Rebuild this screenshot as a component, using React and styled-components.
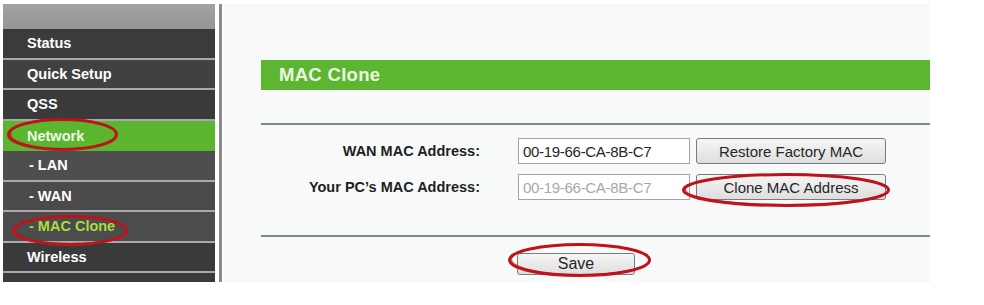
import React from 'react'
import styled, { createGlobalStyle } from 'styled-components'

const GlobalStyle = createGlobalStyle`
  body {
    margin: 0;
    background: #ffffff;
    font-family: "Liberation Sans", Arial, sans-serif;
  }
`

const menu = [
  { label: 'Status', bg: '#3b3b3b' },
  { label: 'Quick Setup', bg: '#414141' },
  { label: 'QSS', bg: '#3a3a3a' },
  { label: 'Network', bg: '#5cb52f', active: true },
  { label: '- LAN', bg: '#4e4e4e' },
  { label: '- WAN', bg: '#4a4a4a' },
  { label: '- MAC Clone', bg: '#4c4c4c', current: true },
  { label: 'Wireless', bg: '#3a3a3a' }
]

const marks = [
  { x: 7, y: 118, w: 111, h: 33 },
  { x: 12, y: 215, w: 116, h: 31 },
  { x: 682, y: 173, w: 208, h: 34 },
  { x: 508, y: 243, w: 143, h: 34 }
]

const Page = styled.div`
  position: relative;
  display: flex;
  align-items: flex-start;
  padding: 4px 0 0 3px;
  width: 930px;
`

const Sidebar = styled.nav`
  width: 212px;
  height: 278px;
  display: flex;
  flex-direction: column;
  background: #3a3a3a;
`

const SideTop = styled.div`
  height: 25px;
  background: linear-gradient(#a3a3a3, #959595);
`

const MenuItem = styled.div`
  height: 30.5px;
  box-sizing: border-box;
  display: flex;
  align-items: center;
  padding-left: ${p => (p.$sub ? 26 : 24)}px;
  background: ${p => p.$bg};
  border-bottom: ${p => (p.$active ? '0' : '2px solid #a9a9a9')};
  color: ${p => (p.$current ? '#a9dc3c' : p.$active ? '#eef8e4' : '#ffffff')};
  font-size: 14.5px;
  font-weight: bold;
`

const Divider = styled.div`
  width: 3px;
  height: 278px;
  margin-left: 4px;
  background: #8c8c8c;
`

const Content = styled.main`
  margin-left: 2px;
  width: 706px;
  height: 279px;
  box-sizing: border-box;
  padding: 56px 0 0 37px;
  background: #f8f9f9;
`

const TitleBar = styled.div`
  height: 30px;
  display: flex;
  align-items: center;
  padding-left: 18px;
  background: #5db632;
  color: #eef6e2;
  font-size: 18.5px;
  font-weight: bold;
  letter-spacing: 0.3px;
`

const Rule = styled.div`
  height: 2px;
  margin-top: ${p => p.$top}px;
  background: #7c8b89;
`

const Form = styled.div`
  display: grid;
  grid-template-columns: 219px 172px 190px;
  column-gap: 38px;
  row-gap: 10px;
  padding-top: 13px;
  & > *:nth-child(3n) {
    margin-left: -32px;
  }
`

const Label = styled.div`
  height: 26px;
  display: flex;
  align-items: center;
  justify-content: flex-end;
  color: #1f1f1f;
  font-size: 14.5px;
  font-weight: bold;
`

const Field = styled.div`
  height: 26px;
  box-sizing: border-box;
  display: flex;
  align-items: center;
  padding-left: 4px;
  background: #ffffff;
  border: 1px solid #a4a4a4;
  color: ${p => (p.$muted ? '#a8a8a8' : '#262626')};
  font-size: 15px;
  letter-spacing: -0.3px;
`

const Button = styled.div`
  height: ${p => p.$h || 26}px;
  width: ${p => p.$w || 190}px;
  box-sizing: border-box;
  display: flex;
  align-items: center;
  justify-content: center;
  background: linear-gradient(#f6f6f6, #dedede);
  border: 1px solid #7b7b7b;
  border-radius: 3px;
  color: #262626;
  font-size: ${p => p.$fs || 15}px;
`

const SaveRow = styled.div`
  padding: 16px 0 0 256px;
`

const Mark = styled.svg`
  position: absolute;
  overflow: visible;
  pointer-events: none;
`

function Oval ({ x, y, w, h }) {
  return (
    <Mark style={{ left: x, top: y, width: w, height: h }} viewBox={`0 0 ${w} ${h}`}>
      <ellipse cx={w / 2} cy={h / 2} rx={w / 2 - 1.5} ry={h / 2 - 1.5} fill="none" stroke="#c3141d" strokeWidth="3" />
      <ellipse cx={w / 2 + 1} cy={h / 2 - 0.5} rx={w / 2 - 2.5} ry={h / 2 - 2} fill="none" stroke="#b5121a" strokeWidth="1.2" opacity="0.7" />
    </Mark>
  )
}

export default function App () {
  return (
    <>
      <GlobalStyle />
      <Page>
        <Sidebar>
          <SideTop />
          {menu.map(m => (
            <MenuItem key={m.label} $bg={m.bg} $active={m.active} $current={m.current} $sub={m.label.startsWith('-')}>
              {m.label}
            </MenuItem>
          ))}
        </Sidebar>
        <Divider />
        <Content>
          <TitleBar>MAC Clone</TitleBar>
          <Rule $top={33} />
          <Form>
            <Label>WAN MAC Address:</Label>
            <Field>00-19-66-CA-8B-C7</Field>
            <Button>Restore Factory MAC</Button>
            <Label>Your PC’s MAC Address:</Label>
            <Field $muted>00-19-66-CA-8B-C7</Field>
            <Button>Clone MAC Address</Button>
          </Form>
          <Rule $top={35} />
          <SaveRow>
            <Button $w={118} $h={22} $fs={16}>Save</Button>
          </SaveRow>
        </Content>
        {marks.map(m => <Oval key={`${m.x}-${m.y}`} {...m} />)}
      </Page>
    </>
  )
}
